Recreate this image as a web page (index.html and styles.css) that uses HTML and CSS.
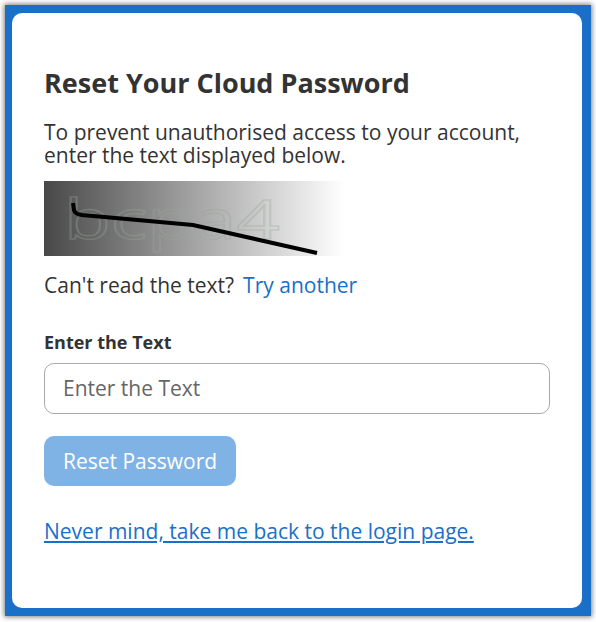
FILE: index.html
```html
<!DOCTYPE html>
<html lang="en">
<head>
    <meta charset="UTF-8">
    <meta name="viewport" content="width=device-width, initial-scale=1.0">
    <title>Reset Your Cloud Password</title>
    <link rel="stylesheet" href="styles.css">
</head>
<body>
    <div class="frame">
        <div class="card">
            <h1 class="heading">Reset Your Cloud Password</h1>
            <p class="intro">To prevent unauthorised access to your account, enter the text displayed below.</p>

            <svg class="captcha" width="300" height="75" viewBox="0 0 300 75">
                <defs>
                    <linearGradient id="captchaFade" x1="0" y1="0" x2="1" y2="0">
                        <stop offset="0" stop-color="#484848"/>
                        <stop offset="1" stop-color="#ffffff"/>
                    </linearGradient>
                    <filter id="captchaBlur"><feGaussianBlur stdDeviation="0.7"/></filter>
                </defs>
                <rect width="300" height="75" fill="url(#captchaFade)"/>
                <text class="captcha-text" x="20" y="58" textLength="216" lengthAdjust="spacingAndGlyphs" filter="url(#captchaBlur)">bcpa4</text>
                <path class="captcha-line" d="M29 22 L30 29 Q31 33 38 34 L149 44 L273 72" filter="url(#captchaBlur)"/>
            </svg>

            <p class="retry"><span>Can't read the text?</span><a href="#">Try another</a></p>

            <label class="field-label" for="captchaInput">Enter the Text</label>
            <input class="field" id="captchaInput" type="text" placeholder="Enter the Text">

            <button class="button" disabled>Reset Password</button>

            <a class="back-link" href="#">Never mind, take me back to the login page.</a>
        </div>
    </div>
</body>
</html>
```

FILE: styles.css
```css
* {
    box-sizing: border-box;
}
body {
    margin: 0;
    width: 596px;
    height: 622px;
    background: #fff;
    font-family: "Open Sans", sans-serif;
    color: #333;
    padding: 5px;
}
.frame {
    height: 611px;
    background: #1a6fc9;
    padding: 8px 9px 8px 7px;
    box-shadow: 0 0 5px 1px rgba(0, 0, 0, 0.5);
}
.card {
    height: 100%;
    background: #fff;
    border-radius: 10px;
    padding: 52px 32px 0;
    display: flex;
    flex-direction: column;
    align-items: flex-start;
}
.heading {
    font-size: 27px;
    line-height: 36px;
    font-weight: 700;
    margin: 0 0 20px;
}
.intro {
    font-size: 21px;
    line-height: 23px;
    margin: 0 0 14px;
}
.captcha {
    display: block;
}
.captcha-text {
    font-family: "Open Sans", sans-serif;
    font-size: 54px;
    fill: none;
    stroke: #98a59a;
    stroke-opacity: 0.35;
    stroke-width: 1.5;
}
.captcha-line {
    fill: none;
    stroke: #000;
    stroke-width: 4;
}
.retry {
    font-size: 21px;
    line-height: 28px;
    margin: 15px 0 0;
    display: flex;
    gap: 9px;
}
a {
    color: #1a6fc9;
    text-decoration: none;
}
.field-label {
    font-size: 18px;
    line-height: 22px;
    font-weight: 700;
    margin: 32px 0 10px;
}
.field {
    width: 100%;
    height: 51px;
    border: 1px solid #aaa;
    border-radius: 10px;
    padding: 0 18px 2px;
    font-family: inherit;
    font-size: 21px;
    color: #333;
    background: #fff;
}
.field::placeholder {
    color: #666;
    opacity: 1;
}
.button {
    margin-top: 22px;
    height: 50px;
    width: 192px;
    padding: 0;
    background: #7fb3e6;
    color: #fff;
    border: none;
    border-radius: 10px;
    font-family: inherit;
    font-size: 21px;
}
.back-link {
    margin-top: 31px;
    font-size: 21px;
    line-height: 28px;
    text-decoration: underline;
}
```
